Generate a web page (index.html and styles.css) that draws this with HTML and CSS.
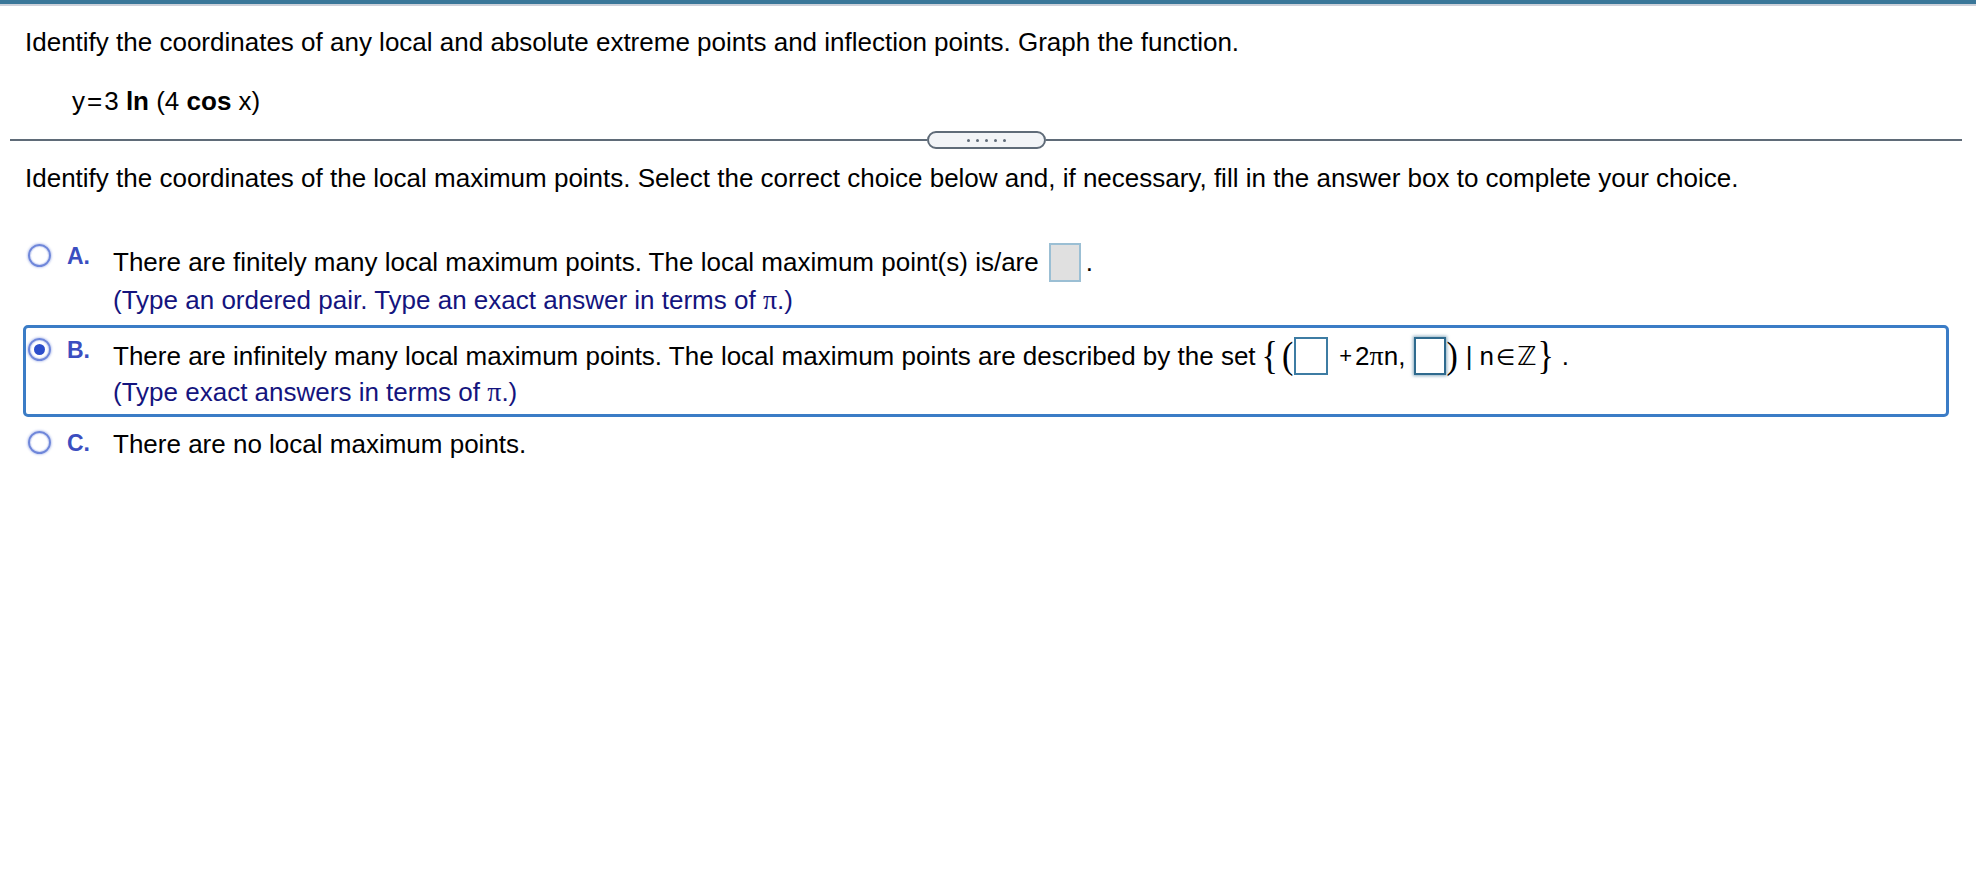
FILE: index.html
```html
<!DOCTYPE html>
<html>
<head>
<meta charset="utf-8">
<link rel="stylesheet" href="styles.css">
</head>
<body>
<div class="topbar"></div>
<main class="page">
  <p class="prompt">Identify the coordinates of any local and absolute extreme points and inflection points. Graph the function.</p>
  <p class="formula">y<span class="eq">=</span>3 <b>ln</b> (4 <b>cos</b> x)</p>
  <div class="divider">
    <span class="rule"></span>
    <span class="pill"><i></i><i></i><i></i><i></i><i></i></span>
    <span class="rule"></span>
  </div>
  <p class="instruction">Identify the coordinates of the local maximum points. Select the correct choice below and, if necessary, fill in the answer box to complete your choice.</p>
  <div class="options">
    <div class="option">
      <span class="radio"></span>
      <span class="label">A.</span>
      <div class="content">
        <div class="line1">There are finitely many local maximum points. The local maximum point(s) is/are<span class="ansbox filled"></span><span class="dot">.</span></div>
        <div class="hint">(Type an ordered pair. Type an exact answer in terms of <span class="pi">π</span>.)</div>
      </div>
    </div>
    <div class="option selected">
      <span class="radio checked"></span>
      <span class="label">B.</span>
      <div class="content">
        <div class="line1">There are infinitely many local maximum points. The local maximum points are described by the set<span class="brace open">{</span><span class="paren">(</span><span class="ansbox"></span><span class="plus">+</span><span class="math">2<span class="pi">π</span>n,</span><span class="ansbox focused"></span><span class="paren close">)</span><span class="bar">|</span><span class="math">n<span class="elem">∈</span><span class="zz">ℤ</span></span><span class="brace shut">}</span><span class="dot end">.</span></div>
        <div class="hint">(Type exact answers in terms of <span class="pi">π</span>.)</div>
      </div>
    </div>
    <div class="option">
      <span class="radio"></span>
      <span class="label">C.</span>
      <div class="content">
        <div class="line1 plain">There are no local maximum points.</div>
      </div>
    </div>
  </div>
</main>
</body>
</html>
```
FILE: styles.css
```css
body {
  margin: 0;
  font-family: "Liberation Sans", Arial, sans-serif;
  color: #000;
  background: #fff;
}

.topbar {
  height: 4px;
  background: #3a7799;
  border-bottom: 2px solid #cdd1da;
}

.page p {
  margin: 0;
}

.prompt {
  margin: 22px 0 0 25px !important;
  font-size: 26px;
  line-height: 28px;
}

.formula {
  margin: 31px 0 0 72px !important;
  font-size: 26px;
  line-height: 28px;
  height: 28px;
}

.formula .eq {
  margin: 0 2px;
}

.divider {
  display: flex;
  align-items: center;
  height: 18px;
  margin: 16px 14px 0 10px;
}

.rule {
  flex: 1;
  height: 2px;
  background: #5f6b78;
}

.pill {
  flex: none;
  width: 119px;
  height: 18px;
  box-sizing: border-box;
  border: 2px solid #5f6b78;
  border-radius: 9px;
  background: #f2f4f7;
  display: flex;
  justify-content: center;
  align-items: center;
  gap: 6px;
}

.pill i {
  width: 3px;
  height: 3px;
  border-radius: 50%;
  background: #5f6b78;
}

.instruction {
  margin: 15px 0 0 25px !important;
  font-size: 26px;
  line-height: 28px;
}

.options {
  margin: 48px 0 0 23px;
  width: 1926px;
}

.option {
  display: flex;
  align-items: flex-start;
  border: 3px solid transparent;
  border-radius: 5px;
  padding: 0 0 0 2px;
}

.option.selected {
  border-color: #3b7cc6;
  margin-top: 8px;
  padding-top: 9px;
  padding-bottom: 8px;
}

.option:last-child {
  margin-top: 10px;
}

.radio {
  flex: none;
  width: 23px;
  height: 23px;
  box-sizing: border-box;
  border-radius: 50%;
  border: 2px solid #6f87da;
  box-shadow: 0 0 2px 1px rgba(130, 150, 225, 0.45), inset 0 0 1px 1px rgba(130, 150, 225, 0.35);
  margin-top: 1px;
  display: flex;
  align-items: center;
  justify-content: center;
}

.radio.checked::after {
  content: "";
  width: 11px;
  height: 11px;
  border-radius: 50%;
  background: #2c4ecb;
}

.label {
  flex: none;
  width: 46px;
  margin-left: 16px;
  margin-top: 1px;
  font-weight: bold;
  font-size: 23px;
  line-height: 24px;
  color: #3b4ec0;
}

.content {
  flex: 1;
  font-size: 26px;
}

.line1 {
  display: flex;
  align-items: center;
  min-height: 39px;
  white-space: pre;
}

.option.selected .line1 {
  min-height: 38px;
}

.line1.plain {
  min-height: 28px;
  line-height: 28px;
}

.hint {
  margin-top: 4px;
  line-height: 28px;
  color: #14147e;
}

.option.selected .hint {
  margin-top: 3px;
}

.pi {
  font-family: "Liberation Serif", "DejaVu Serif", serif;
  font-size: 28px;
}

.ansbox {
  flex: none;
  width: 34px;
  height: 38px;
  box-sizing: border-box;
  border: 2px solid #3d7ca3;
  background: #fff;
}

.ansbox.filled {
  width: 32px;
  height: 39px;
  border-color: #9bbfd4;
  background: #e0e0e0;
  margin-left: 10px;
}

.ansbox.focused {
  width: 32px;
  border-color: #2f6a8e;
  box-shadow: 0 0 3px 1px rgba(47, 106, 142, 0.55);
  margin-left: 9px;
}

.dot {
  margin-left: 5px;
}

.brace {
  font-family: "Liberation Serif", "DejaVu Serif", serif;
  font-size: 34px;
  line-height: 38px;
  transform: scaleY(1.2);
}

.brace.open {
  margin-left: 6px;
}

.brace.shut {
  margin-left: 1px;
}

.dot.end {
  margin-left: 8px;
}

.paren {
  font-family: "Liberation Serif", serif;
  font-size: 34px;
  line-height: 38px;
  margin: 0 1px 0 4px;
  transform: scaleY(1.1);
}

.paren.close {
  margin: 0 0 0 0;
}

.plus {
  font-size: 22px;
  margin: 0 3px 0 11px;
}

.bar {
  margin: 0 7px 0 8px;
}

.elem {
  font-family: "DejaVu Sans", sans-serif;
  font-size: 22px;
  margin: 0 2px;
}

.zz {
  font-family: "DejaVu Sans", sans-serif;
  font-size: 26px;
}
```
